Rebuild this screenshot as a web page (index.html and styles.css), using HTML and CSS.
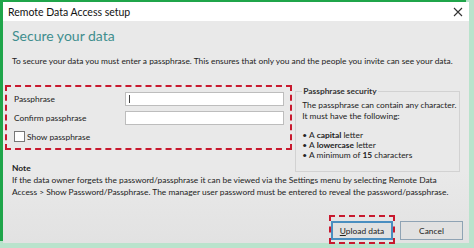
FILE: index.html
```html
<!DOCTYPE html>
<html>
<head>
    <link rel="stylesheet" href="styles.css">
</head>
<body>
    <div class="window">
        <div class="titlebar">
            <span class="title">Remote Data Access setup</span>
            <svg class="close" width="10" height="10" viewBox="0 0 10 10">
                <path d="M1 1 L9 9 M9 1 L1 9" stroke="#333" stroke-width="1.1" fill="none"/>
            </svg>
        </div>
        <div class="content">
            <h1 class="heading">Secure your data</h1>
            <p class="intro">To secure your data you must enter a passphrase. This ensures that only you and the people you invite can see your data.</p>

            <div class="middle">
                <div class="form-box">
                    <div class="row">
                        <label class="label">Passphrase</label>
                        <div class="input"><span class="caret"></span></div>
                    </div>
                    <div class="row">
                        <label class="label">Confirm passphrase</label>
                        <div class="input"></div>
                    </div>
                    <div class="check-row">
                        <span class="checkbox"></span>
                        <span>Show passphrase</span>
                    </div>
                </div>

                <fieldset class="security">
                    <legend>Passphrase security</legend>
                    <p>The passphrase can contain any character.<br>It must have the following:</p>
                    <ul>
                        <li>A <b>capital</b> letter</li>
                        <li>A <b>lowercase</b> letter</li>
                        <li>A minimum of <b>15</b> characters</li>
                    </ul>
                </fieldset>
            </div>

            <div class="note">
                <div class="note-title">Note</div>
                <p>If the data owner forgets the password/passphrase it can be viewed via the Settings menu by selecting Remote Data<br>Access &gt; Show Password/Passphrase. The manager user password must be entered to reveal the password/passphrase.</p>
            </div>

            <div class="buttons">
                <div class="highlight">
                    <button class="btn btn-default"><u>U</u>pload data</button>
                </div>
                <button class="btn">Cancel</button>
            </div>
        </div>
    </div>
</body>
</html>
```

FILE: styles.css
```css
html, body {
    margin: 0;
    padding: 0;
}

body {
    width: 474px;
    height: 248px;
    overflow: hidden;
    background: #b9e3cc;
    font-family: 'Lato', sans-serif;
    font-size: 8.4px;
    color: #222;
}

.window {
    margin: 2px 5px 5px 3px;
    height: 241px;
    display: flex;
    flex-direction: column;
    box-shadow: -3px -2px 0 #1fa54a;
    background: linear-gradient(#e9e9e9 70%, #e2e2e2);
}

.titlebar {
    height: 19px;
    flex-shrink: 0;
    background: #fff;
    display: flex;
    align-items: center;
    justify-content: space-between;
    padding: 0 6px 0 5px;
}

.title {
    font-size: 10.5px;
    color: #111;
}

.content {
    flex: 1;
    padding: 0 9px 0 9px;
    display: flex;
    flex-direction: column;
}

.heading {
    margin: 3px 0 0 0;
    font-weight: normal;
    font-size: 14px;
    color: #3f8e8e;
    height: 24px;
    line-height: 24px;
}

.intro {
    margin: 7px 0 0 0;
    line-height: 12px;
    white-space: nowrap;
}

.middle {
    display: flex;
    margin-top: 18px;
    margin-left: -7px;
    align-items: flex-start;
}

.form-box {
    width: 276px;
    height: 56px;
    border: 2px dashed #c8192e;
    padding: 5px 6px 0 7px;
    display: flex;
    flex-direction: column;
    gap: 5px;
}

.row {
    display: flex;
    align-items: center;
    height: 14px;
}

.label {
    width: 111px;
}

.input {
    flex: 1;
    height: 12px;
    background: #fff;
    border: 1px solid #bdbdbd;
    display: flex;
    align-items: center;
    padding-left: 3px;
}

.caret {
    width: 1px;
    height: 8px;
    background: #444;
}

.check-row {
    display: flex;
    align-items: center;
    gap: 2px;
    height: 13px;
}

.checkbox {
    width: 9px;
    height: 9px;
    background: #fff;
    border: 1px solid #777;
}

.security {
    margin: 1px 0 0 3px;
    border: 1px solid #d2d2d2;
    padding: 4px 6px 8px 6px;
    width: 168px;
    height: 86px;
    box-sizing: border-box;
    min-width: 0;
    white-space: nowrap;
}

.security legend {
    font-weight: bold;
    padding: 0 1px;
    color: #333;
}

.security p {
    margin: 0;
    line-height: 11px;
}

.security ul {
    margin: 8px 0 0 0;
    padding: 0;
    list-style: none;
    line-height: 10px;
}

.security li::before {
    content: "\2022";
    margin-right: 2px;
}

.note {
    margin-top: -9px;
    width: 300px;
    white-space: nowrap;
}

.note-title {
    font-weight: bold;
    line-height: 11px;
}

.note p {
    margin: 0;
    line-height: 12px;
}

.buttons {
    margin-top: auto;
    margin-bottom: -1px;
    display: flex;
    justify-content: flex-end;
    align-items: flex-end;
    gap: 5px;
    margin-right: -3px;
}

.highlight {
    border: 2px dashed #c8192e;
    padding: 4px 0 2px 0;
}

.btn {
    font-family: inherit;
    font-size: 8.4px;
    width: 62px;
    height: 19px;
    background: #e1e1e1;
    border: 1px solid #8fa3b4;
    color: #222;
    padding: 0;
}

.buttons > .btn {
    margin-bottom: 4px;
    width: 63px;
}

.btn-default {
    border: 1px solid #4a8ec0;
    box-shadow: inset 0 0 0 1px #4a8ec0;
}
```
